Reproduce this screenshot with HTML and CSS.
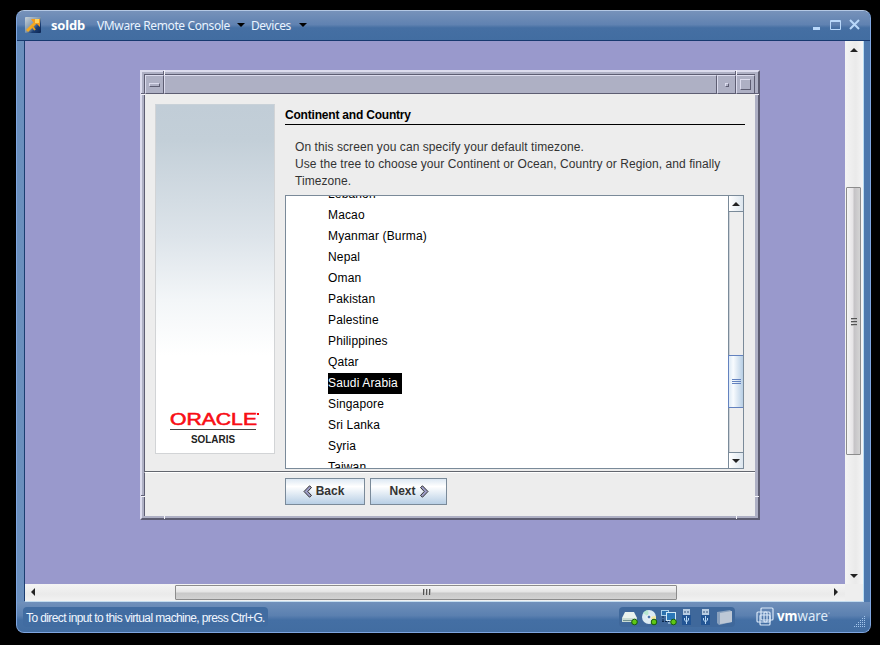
FILE: index.html
```html
<!DOCTYPE html>
<html lang="en">

<head>
    <meta charset="UTF-8">
    <meta name="viewport" content="width=device-width, initial-scale=1.0">
    <title>soldb</title>
    <link rel="stylesheet" href="styles.css">
</head>

<body>
    <div class="console">
        <header class="titlebar">
            <svg class="logo" width="16" height="16" viewBox="0 0 16 16">
                <defs>
                    <linearGradient id="logo-bg" x1="0" y1="0" x2="1" y2="1">
                        <stop offset="0" stop-color="#c9d2d8"/>
                        <stop offset=".5" stop-color="#7f96ac"/>
                        <stop offset=".7" stop-color="#1c3f75"/>
                        <stop offset="1" stop-color="#0a2350"/>
                    </linearGradient>
                </defs>
                <rect width="16" height="16" rx="1" fill="url(#logo-bg)"/>
                <path d="M2 14L11 5" stroke="#f3a922" stroke-width="3"/>
                <path d="M6 2H15V10L12 7L8 5Z" fill="#f39a1d"/>
                <rect x="10" y="2" width="4" height="4" fill="#ffd45c"/>
                <path d="M7 9L10 13" stroke="#e9a21f" stroke-width="2"/>
            </svg>
            <b class="vm-name">soldb</b>
            <span class="menu menu-console">VMware Remote Console</span>
            <i class="caret"></i>
            <span class="menu menu-devices">Devices</span>
            <i class="caret"></i>
            <svg class="win-buttons" width="48" height="14" viewBox="0 0 48 14">
                <rect x="1" y="9" width="7" height="3" fill="#b9d8fa"/>
                <path d="M18.5 2.500H28.500V11.500H18.500ZM18 3.500H29" fill="none" stroke="#b9d8fa"/>
                <path d="M38 2L47 11M47 2L38 11" stroke="#b9d8fa" stroke-width="2"/>
            </svg>
        </header>

        <div class="screen">
            <div class="desktop">
                <div class="dialog">
                    <div class="dialog-title">
                        <div class="tbtn"><i class="glyph-menu"></i></div>
                        <div class="tbar"></div>
                        <div class="tbtn"><i class="glyph-min"></i></div>
                        <div class="tbtn"><i class="glyph-max"></i></div>
                    </div>
                    <div class="dialog-main">
                        <div class="banner">
                            <svg width="92" height="38" viewBox="0 -4 92 38">
                                <text class="oracle" x="0" y="12.500" textLength="87" lengthAdjust="spacingAndGlyphs">ORACLE</text>
                                <rect x="87" y="1" width="2" height="2" fill="#f00"/>
                                <rect x="0" y="17" width="86" height="1" fill="#444"/>
                                <text class="solaris" x="21" y="31" textLength="44" lengthAdjust="spacingAndGlyphs">SOLARIS</text>
                            </svg>
                        </div>
                        <div class="panel">
                            <h1>Continent and Country</h1>
                            <p>On this screen you can specify your default timezone.<br>
                                Use the tree to choose your Continent or Ocean, Country or Region, and finally<br>
                                Timezone.</p>
                            <div class="tree">
                                <ul>
                                    <li><span>Lebanon</span></li>
                                    <li><span>Macao</span></li>
                                    <li><span>Myanmar (Burma)</span></li>
                                    <li><span>Nepal</span></li>
                                    <li><span>Oman</span></li>
                                    <li><span>Pakistan</span></li>
                                    <li><span>Palestine</span></li>
                                    <li><span>Philippines</span></li>
                                    <li><span>Qatar</span></li>
                                    <li><span class="selected">Saudi Arabia</span></li>
                                    <li><span>Singapore</span></li>
                                    <li><span>Sri Lanka</span></li>
                                    <li><span>Syria</span></li>
                                    <li><span>Taiwan</span></li>
                                </ul>
                                <div class="tree-scroll">
                                    <div class="arrow"><i class="up"></i></div>
                                    <div class="track"><div class="thumb"><i></i><i></i><i></i></div></div>
                                    <div class="arrow"><i class="down"></i></div>
                                </div>
                            </div>
                        </div>
                    </div>
                    <div class="dialog-buttons">
                        <button class="back">
                            <svg width="10" height="13" viewBox="0 0 10 13"><path d="M6.500 .8L1 6.500L6.500 12.200L8.500 10.500L4.800 6.500L8.500 2.500Z" fill="#9c9cc6" stroke="#333"/></svg>
                            <span>Back</span>
                        </button>
                        <button class="next">
                            <span>Next</span>
                            <svg width="10" height="13" viewBox="0 0 10 13"><path d="M3.500 .8L9 6.500L3.500 12.200L1.500 10.500L5.200 6.500L1.500 2.500Z" fill="#9c9cc6" stroke="#333"/></svg>
                        </button>
                    </div>
                    <!-- frame corner notches -->
                    <svg class="notches" width="620" height="450" viewBox="0 0 620 450">
                        <path d="M24.500 0V5M596.500 0V5M1 24.500H5M615 24.500H619M1 426.500H5M615 426.500H619M24.500 446V449M596.500 446V449" stroke="#f4f4fa"/>
                        <path d="M23.500 1V5M595.500 1V5M1 23.500H5M615 23.500H619M1 425.500H5" stroke="#63637a"/>
                    </svg>
                </div>
            </div>
            <div class="vscroll">
                <i class="up"></i>
                <div class="vthumb"><i></i><i></i><i></i></div>
                <i class="down"></i>
            </div>
            <div class="hscroll">
                <i class="left"></i>
                <div class="hthumb"><i></i><i></i><i></i></div>
                <i class="right"></i>
            </div>
            <div class="corner"></div>
        </div>

        <footer class="statusbar">
            <span class="hint">To direct input to this virtual machine, press Ctrl+G.</span>
            <div class="devices">
                <svg width="116" height="20" viewBox="0 -1 116 20">
                    <!-- hard disk -->
                    <path d="M6 4H15L18 10H3Z" fill="#eaf3ee"/>
                    <rect x="3" y="10" width="15" height="4" fill="#c8dbd4"/>
                    <path d="M4 12.500H14" stroke="#71918f"/>
                    <circle cx="15.500" cy="14" r="2.800" fill="#5ec814" stroke="#175c0a"/>
                    <!-- cd -->
                    <circle cx="30" cy="9" r="7" fill="#dcebf3"/>
                    <path d="M30 9L24 5A7 7 0 0 1 29 2Z" fill="#b7e7d0"/>
                    <path d="M30 9L36 13A7 7 0 0 0 37 8Z" fill="#f3e7a0"/>
                    <circle cx="30" cy="9" r="2" fill="#4a78ae" stroke="#fff"/>
                    <circle cx="35" cy="14" r="2.800" fill="#5ec814" stroke="#175c0a"/>
                    <!-- network -->
                    <path d="M44 13V6M43 13.500H50" stroke="#0d294d" stroke-dasharray="2 1"/>
                    <rect x="42.500" y="2.500" width="7" height="5" fill="#2b70ad" stroke="#a9cfea"/>
                    <rect x="47.500" y="4.500" width="9" height="8" fill="#2b78b8" stroke="#d2ebf8"/>
                    <path d="M49 15H56M52 13V15" stroke="#d2ebf8"/>
                    <circle cx="54.500" cy="14" r="2.800" fill="#5ec814" stroke="#175c0a"/>
                    <!-- usb -->
                    <g id="usb">
                        <rect x="64" y="1" width="7" height="6" fill="#b9cde2"/>
                        <path d="M66 3V5M69 3V5" stroke="#34557e"/>
                        <rect x="63" y="7" width="9" height="10" fill="#235594"/>
                        <path d="M67.500 8V16M65.500 10V12L67.500 14L69.500 12V10" fill="none" stroke="#b8d9f5"/>
                    </g>
                    <use href="#usb" x="19"/>
                    <!-- shared folder -->
                    <path d="M98 4L111 2L113 4V14L100 17L98 15Z" fill="#8aa1bd"/>
                    <path d="M101 5L113 3V14L101 16Z" fill="#bdc8d6"/>
                </svg>
            </div>
            <svg class="brand" width="76" height="20" viewBox="0 0 76 20">
                <g fill="none" stroke="#d9e8f8" stroke-width="1.200">
                    <rect x="1" y="5" width="10" height="10" rx="1"/>
                    <rect x="5" y="1" width="12" height="12" rx="1"/>
                    <rect x="4" y="8" width="10" height="10" rx="1"/>
                    <rect x="8" y="5" width="6" height="10" rx="1"/>
                </g>
                <text x="21" y="14" textLength="51" lengthAdjust="spacingAndGlyphs"><tspan class="vm">vm</tspan><tspan class="ware">ware</tspan></text>
                <circle cx="73" cy="6" r=".6" fill="#d9e8f8"/>
            </svg>
            <svg class="grip" width="12" height="12" viewBox="0 0 12 12">
                <path d="M10 1.500H12M8 3.500H12M6 5.500H12M4 7.500H12M2 9.500H12M0 11.500H12" stroke="#a4c6ec" stroke-dasharray="1 1"/>
            </svg>
        </footer>
    </div>
</body>

</html>
```
FILE: styles.css
```css
* {
    box-sizing: border-box;
}

html,
body {
    margin: 0;
    padding: 0;
}

body {
    width: 880px;
    height: 645px;
    padding: 10px 9px 12px 16px;
    background: #000;
    overflow: hidden;
    font-family: "Liberation Sans", Arial, sans-serif;
}

.console {
    width: 855px;
    height: 623px;
    border: 1px solid #7fa6e0;
    border-top-color: #b4c8e4;
    border-radius: 8px;
    background: linear-gradient(90deg, #6b8fbd, #5d84b4 50%, #4d78ad);
    display: flex;
    flex-direction: column;
    overflow: hidden;
}

/* window title */

.titlebar {
    height: 30px;
    padding: 0 10px 1px 8px;
    display: flex;
    align-items: center;
    background: linear-gradient(#7792ba, #6082b1 47%, #456fa3 58%, #426da1);
    border-bottom: 1px solid #17396f;
    color: #e9f3ff;
    font-family: "Noto Sans", "Open Sans", sans-serif;
    font-size: 12px;
}

.vm-name {
    width: 46px;
    margin-left: 10px;
    font-size: 13px;
    letter-spacing: -0.2px;
    color: #fff;
}

.menu {
    white-space: nowrap;
}

.menu-console {
    width: 140px;
    letter-spacing: -0.38px;
}

.menu-devices {
    width: 48px;
    margin-left: 6px;
    letter-spacing: -0.4px;
}

.caret {
    border: 4px solid transparent;
    border-top-color: #000;
    border-bottom: 0;
}

.win-buttons {
    margin-left: auto;
}

/* guest screen and its scrollbars */

.screen {
    height: 561px;
    margin: 0 6px 0 7px;
    border-left: 1px solid #1c3d70;
    border-right: 1px solid #b8ddf4;
    border-bottom: 1px solid #c4dcef;
    display: grid;
    grid-template-columns: 820px 1fr;
    grid-template-rows: 543px 1fr;
    background: #eee;
}

.desktop {
    background: #9999cc;
    padding: 29px 0 0 115px;
}

.up,
.down {
    border: 4px solid transparent;
}

.up {
    border-bottom-color: #222;
    border-top: 0;
}

.down {
    border-top-color: #222;
    border-bottom: 0;
}

.left,
.right {
    border: 4px solid transparent;
}

.left {
    border-right-color: #222;
    border-left: 0;
}

.right {
    border-left-color: #222;
    border-right: 0;
}

.vscroll {
    display: flex;
    flex-direction: column;
    align-items: center;
    padding: 7px 1px 6px 0;
    background: linear-gradient(90deg, #f4f4f4, #eaeaea 60%, #f5f5f5);
}

.vthumb {
    width: 15px;
    height: 268px;
    margin-top: 135px;
    border: 1px solid #8c8c8c;
    border-radius: 1px;
    background: linear-gradient(90deg, #f5f5f5, #e6e4e6 45%, #c5c3c6 55%, #d4d4d4);
    display: flex;
    flex-direction: column;
    align-items: center;
    justify-content: center;
    gap: 2px;
}

.vthumb i {
    width: 6px;
    height: 1px;
    background: #555;
    box-shadow: 0 1px #b5b5b5;
}

.vscroll .down {
    margin-top: auto;
}

.hscroll {
    display: flex;
    align-items: center;
    padding: 0 7px 1px 6px;
    background: linear-gradient(#f4f4f4, #eaeaea 60%, #f2f2f2);
}

.hthumb {
    width: 502px;
    height: 15px;
    margin-left: 140px;
    border: 1px solid #8c8c8c;
    border-radius: 1px;
    background: linear-gradient(#f5f5f5, #e4e4e4 45%, #c8c8c8 55%, #d2d2d2);
    display: flex;
    align-items: center;
    justify-content: center;
    gap: 2px;
}

.hthumb i {
    width: 1px;
    height: 6px;
    background: #555;
    box-shadow: 1px 0 #b5b5b5;
}

.hscroll .right {
    margin-left: auto;
}

/* installer dialog */

.dialog {
    position: relative;
    width: 620px;
    height: 450px;
    border: 2px solid;
    border-color: #dcdcee #5d5d72 #5d5d72 #dcdcee;
    padding: 2px 3px 2px 2px;
    background: #aeb0c4;
    display: flex;
    flex-direction: column;
}

.dialog-title {
    height: 20px;
    border-top: 1px solid #5d5d72;
    border-left: 1px solid #5d5d72;
    display: flex;
}

.tbtn,
.tbar {
    border: 1px solid;
    border-color: #dcdcee #5d5d72 #5d5d72 #dcdcee;
    background: #aeb0c4;
}

.tbtn {
    width: 19px;
    display: flex;
    align-items: center;
    justify-content: center;
}

.tbar {
    flex: 1;
}

.tbtn i {
    border: 1px solid;
    border-color: #dcdcee #5d5d72 #5d5d72 #dcdcee;
}

.glyph-menu {
    width: 11px;
    height: 4px;
}

.glyph-min {
    width: 4px;
    height: 4px;
}

.glyph-max {
    width: 11px;
    height: 11px;
}

.dialog-main {
    height: 378px;
    padding: 10px 10px 0;
    border-left: 1px solid #5d5d72;
    border-bottom: 1px solid #63676f;
    background: #ededed;
    display: flex;
    gap: 10px;
}

.banner {
    flex: none;
    width: 120px;
    height: 350px;
    border: 1px solid #d2d4d6;
    border-top-color: #c8d1d8;
    background: linear-gradient(#c1cdd7, #c3cfd8 10%, #dde4ea 38%, #f3f6f8 56%, #fff 72%);
    display: flex;
    align-items: flex-end;
    padding: 0 0 7px 14px;
}

.oracle {
    font: 16.5px "Liberation Sans", Arial, sans-serif;
    fill: #f80d15;
    stroke: #f80d15;
    stroke-width: 0.6px;
}

.solaris {
    font: bold 10.5px "Liberation Sans", Arial, sans-serif;
    fill: #222;
}

.panel {
    flex: none;
    width: 460px;
}

h1 {
    margin: 0;
    height: 21px;
    line-height: 22px;
    border-bottom: 1px solid #000;
    font-size: 12px;
    letter-spacing: -0.2px;
    color: #000;
}

p {
    margin: 14px 0 5px 10px;
    line-height: 17px;
    font-size: 12px;
    letter-spacing: 0.075px;
    color: #333;
    white-space: nowrap;
}

.tree {
    width: 459px;
    height: 274px;
    border: 1px solid #7a8a99;
    background: #fff;
    display: flex;
    overflow: hidden;
}

.tree ul {
    flex: 1;
    margin: -12px 0 0;
    padding: 0 0 0 42px;
    list-style: none;
}

.tree li {
    height: 21px;
    line-height: 20px;
    font-size: 12px;
    letter-spacing: 0.15px;
    color: #000;
}

.tree li span {
    display: inline-block;
    height: 21px;
}

.tree li .selected {
    width: 74px;
    background: #000;
    color: #fff;
}

.tree-scroll {
    width: 15px;
    border-left: 1px solid #7a8a99;
    background: #eee;
    display: flex;
    flex-direction: column;
}

.arrow {
    height: 16px;
    background: linear-gradient(90deg, #fff, #dde6ee);
    border-bottom: 1px solid #7a8a99;
    display: flex;
    align-items: center;
    justify-content: center;
}

.arrow:last-child {
    border-bottom: 0;
    border-top: 1px solid #7a8a99;
}

.track {
    flex: 1;
    border-left: 1px solid #ccd2d8;
}

.thumb {
    height: 53px;
    margin: 143px 0 0 -2px;
    border: 1px solid #6382bf;
    border-right: 0;
    background: linear-gradient(90deg, #dce9f5, #f8fbfe 30%, #b8cfe5);
    display: flex;
    flex-direction: column;
    align-items: center;
    justify-content: center;
    gap: 1px;
}

.thumb i {
    width: 9px;
    height: 1px;
    background: #6382bf;
}

.dialog-buttons {
    flex: 1;
    padding: 5px 0 0 140px;
    border-left: 1px solid #5d5d72;
    border-top: 1px solid #fff;
    background: #ededed;
    display: flex;
    align-items: flex-start;
    gap: 5px;
}

button {
    height: 27px;
    padding: 0 3px 0 0;
    border: 1px solid #7a8a99;
    background: linear-gradient(#dde8f3, #fff 30%, #b8cfe5);
    display: flex;
    align-items: center;
    justify-content: center;
    gap: 3px;
    font: bold 12px "Liberation Sans", Arial, sans-serif;
    color: #333;
}

button span {
    padding-bottom: 1px;
}

.back {
    width: 80px;
}

.next {
    width: 77px;
    padding: 0 0 0 1px;
}

.notches {
    position: absolute;
    top: -2px;
    left: -2px;
}

/* status bar */

.statusbar {
    flex: 1;
    display: flex;
    align-items: flex-start;
    padding: 5px 4px 0 6px;
    background: linear-gradient(#7090bb, #5b80b0 45%, #446fa4 60%, #426da1);
}

.hint {
    width: 245px;
    height: 20px;
    padding-left: 3px;
    line-height: 22px;
    border-radius: 4px;
    background: #416ca1;
    color: #f0f6ff;
    font-size: 12px;
    letter-spacing: -0.61px;
    white-space: nowrap;
}

.devices {
    width: 116px;
    height: 20px;
    margin-left: 351px;
    border-radius: 4px;
    background: #3f689b;
}

.brand {
    margin-left: 21px;
}

.vm,
.ware {
    font-family: "Noto Sans", sans-serif;
    font-size: 14px;
    fill: #dfebf8;
}

.vm {
    font-weight: bold;
    fill: #fff;
}

.grip {
    margin: 8px 0 0 auto;
}
```
